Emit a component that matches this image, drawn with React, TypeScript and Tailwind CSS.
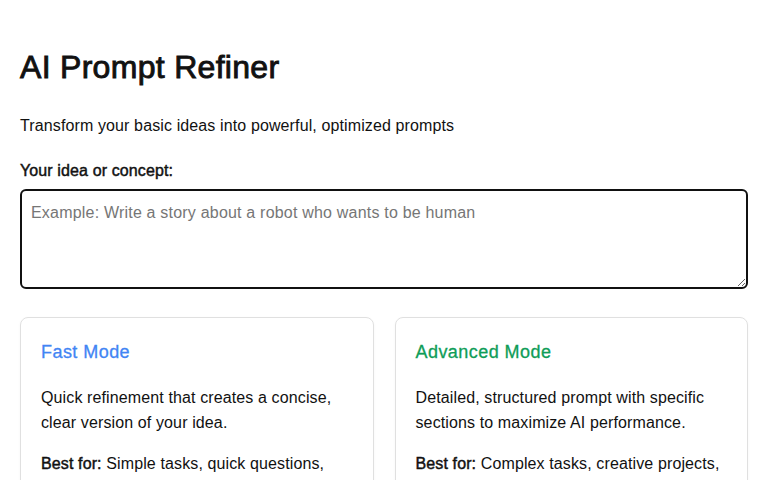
import React, { useState } from 'react';

const modes = [
  {
    title: 'Fast Mode',
    color: 'text-[#4285f4]',
    desc: 'Quick refinement that creates a concise, clear version of your idea.',
    best: 'Simple tasks, quick questions, everyday use.',
  },
  {
    title: 'Advanced Mode',
    color: 'text-[#0f9d58]',
    desc: 'Detailed, structured prompt with specific sections to maximize AI performance.',
    best: 'Complex tasks, creative projects, detailed outputs.',
  },
];

const App: React.FC = () => {
  const [idea, setIdea] = useState<string>('');

  return (
    <div className="min-h-screen bg-white px-5 pt-12 text-[#111] tracking-[0.12px] font-['Liberation_Sans',Arial,sans-serif]">
      <h1 className="text-[32px] leading-[38px] font-normal tracking-[0.3px] [-webkit-text-stroke:0.9px_#111]">AI Prompt Refiner</h1>
      <p className="mt-[28px] text-base leading-6">Transform your basic ideas into powerful, optimized prompts</p>

      <label htmlFor="idea" className="mt-[21px] block text-base leading-6 font-normal [-webkit-text-stroke:0.45px_#111]">
        Your idea or concept:
      </label>
      <textarea
        id="idea"
        value={idea}
        onChange={(e) => setIdea(e.target.value)}
        placeholder="Example: Write a story about a robot who wants to be human"
        className="mt-[6px] block h-[100px] w-full rounded-md border-2 border-[#111] px-[9px] py-[12px] text-base leading-5 tracking-[0.2px] placeholder:text-[#767676] outline-none"
      />

      <div className="mt-[28px] grid grid-cols-2 gap-[21px]">
        {modes.map((m) => (
          <div key={m.title} className="rounded-lg border border-[#e0e0e0] p-5 shadow-[0_1px_3px_rgba(0,0,0,0.04)]">
            <h3 className={`text-lg leading-7 tracking-[0.45px] [-webkit-text-stroke:0.3px_currentColor] ${m.color}`}>{m.title}</h3>
            <p className="mt-[19px] text-base leading-[25px]">{m.desc}</p>
            <p className="mt-4 text-base leading-[25px]">
              <span className="[-webkit-text-stroke:0.45px_#111]">Best for:</span> {m.best}
            </p>
          </div>
        ))}
      </div>
    </div>
  );
};

export default App;
